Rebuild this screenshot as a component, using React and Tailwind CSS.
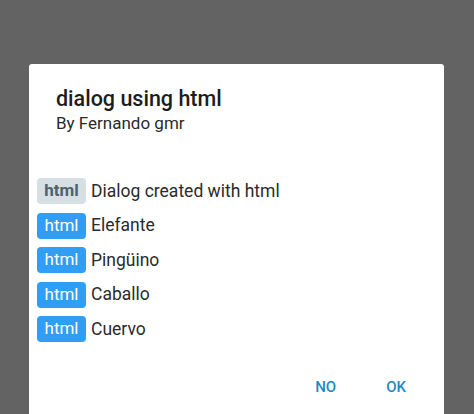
const items = [
  { label: "Dialog created with html", muted: true },
  { label: "Elefante" },
  { label: "Pingüino" },
  { label: "Caballo" },
  { label: "Cuervo" },
];

function Badge({ muted }) {
  return (
    <span
      className={`inline-flex h-[26px] w-[49px] items-center justify-center rounded-[4px] text-[17px] ${
        muted ? "bg-[#d6dfe4] font-bold text-[#4b6370]" : "bg-[#2f9ef4] text-white"
      }`}
    >
      html
    </span>
  );
}

export default function App() {
  return (
    <div className="h-[414px] w-[474px] overflow-hidden bg-[#636363] pt-[64px] font-['Roboto',sans-serif]">
      <div className="ml-[29px] h-[400px] w-[415px] rounded-t-[3px] bg-white">
        <div className="px-[27px] pt-[21px]">
          <h1 className="text-[21.5px] font-medium leading-[28px] text-[#1d1d1d]">dialog using html</h1>
          <p className="text-[17px] leading-[21px] text-[#2a2a2a]">By Fernando gmr</p>
        </div>

        <ul className="mt-[44px] flex flex-col gap-[8.5px] px-[8px]">
          {items.map((item) => (
            <li key={item.label} className="flex h-[26px] items-center gap-[5px]">
              <Badge muted={item.muted} />
              <span className="text-[17.5px] text-[#2b2b2b]">{item.label}</span>
            </li>
          ))}
        </ul>

        <div className="mt-[34px] flex justify-end gap-[50px] pr-[38px]">
          <button className="text-[15px] font-medium text-[#1b8cc0]">NO</button>
          <button className="text-[15px] font-medium text-[#1b8cc0]">OK</button>
        </div>
      </div>
    </div>
  );
}
